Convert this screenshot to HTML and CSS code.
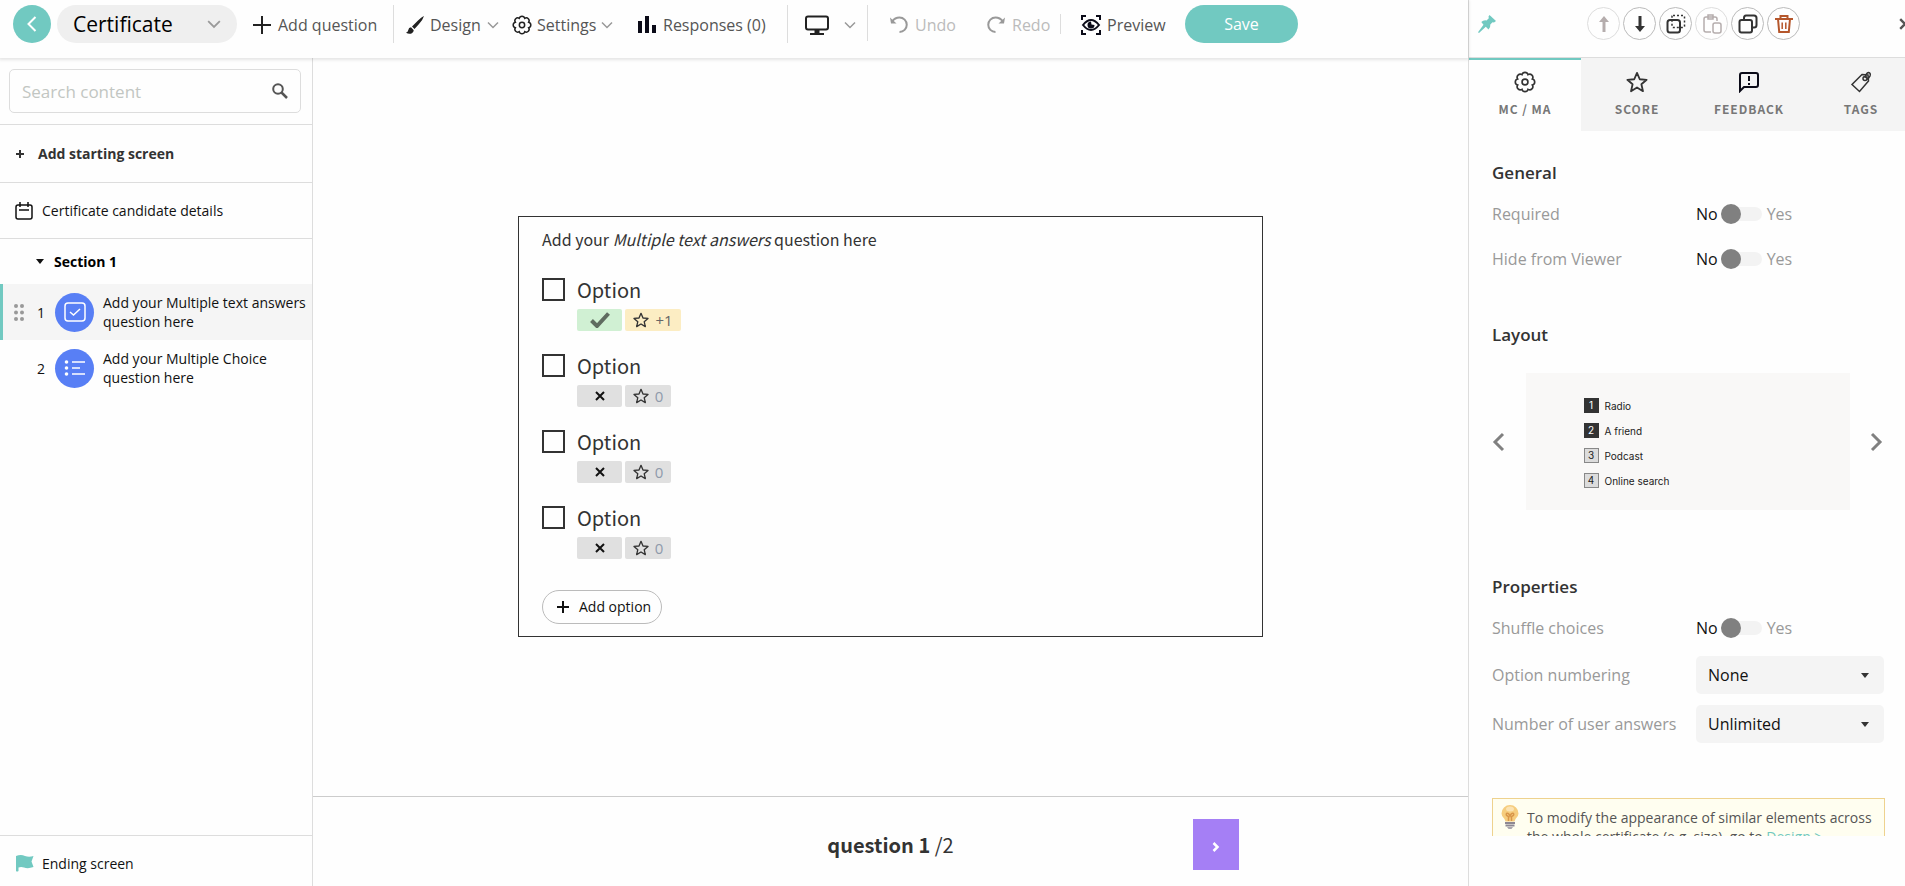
FILE: index.html
```html
<!DOCTYPE html>
<html lang="en">
<head>
    <meta charset="UTF-8">
    <meta name="viewport" content="width=device-width, initial-scale=1.0">
    <title>Certificate</title>
    <link rel="stylesheet" href="styles.css">
</head>
<body>
    <svg class="sprite" aria-hidden="true">
        <symbol id="chevron" viewBox="0 0 12 12"><path d="M1 3.500 6 8.500 11 3.500" fill="none" stroke="currentColor" stroke-width="1.500"/></symbol>
        <symbol id="plus" viewBox="0 0 18 18"><path d="M9 0V18M0 9H18" stroke="currentColor" stroke-width="2"/></symbol>
        <symbol id="plus-small" viewBox="0 0 8 8"><path d="M4 0V8M0 4H8" stroke="currentColor" stroke-width="2"/></symbol>
        <symbol id="star" viewBox="0 0 24 24"><path d="M12 2 15 9 22.500 9.600 16.800 14.500 18.500 22 12 18 5.500 22 7.200 14.500 1.500 9.600 9 9Z" fill="none" stroke="currentColor" stroke-width="2" stroke-linejoin="round"/></symbol>
        <symbol id="gear" viewBox="0 0 24 24">
            <path d="M20 8.700A3.400 3.400 0 0 1 20 15.300A3.400 3.400 0 0 1 15.300 20A3.400 3.400 0 0 1 8.700 20A3.400 3.400 0 0 1 4 15.300A3.400 3.400 0 0 1 4 8.700A3.400 3.400 0 0 1 8.700 4A3.400 3.400 0 0 1 15.300 4A3.400 3.400 0 0 1 20 8.700Z" fill="none" stroke="currentColor" stroke-width="1.800"/>
            <circle cx="12" cy="12" r="3.200" fill="none" stroke="currentColor" stroke-width="1.800"/>
        </symbol>
        <symbol id="undo" viewBox="0 0 18 18"><path d="M2 5.500Q5 1.500 9.500 1.500A7 7 0 0 1 9.500 16" fill="none" stroke="currentColor" stroke-width="2"/><path d="M0 1.500 1 7.500H6.500Z" fill="currentColor"/></symbol>
        <symbol id="cross" viewBox="0 0 10 10"><path d="M1 1 9 9M9 1 1 9" stroke="currentColor" stroke-width="2"/></symbol>
    </svg>

    <div class="app">
        <div class="workspace">
            <header class="toolbar">
                <button class="back" aria-label="Back">
                    <svg width="10" height="16" viewBox="0 0 10 16"><path d="M8.500 1 1.500 8 8.500 15" fill="none" stroke="currentColor" stroke-width="2"/></svg>
                </button>
                <button class="title">Certificate <svg class="chevron" width="14" height="14"><use href="#chevron"/></svg></button>
                <button class="tool add-question"><svg width="18" height="18"><use href="#plus"/></svg>Add question</button>
                <span class="divider"></span>
                <button class="tool design">
                    <svg width="18" height="18" viewBox="0 0 18 18"><path d="M18 0Q15.500 1 11.500 5L6 10.500 8.500 13 13 8Q17 3.500 18 0ZM5 11.300Q2.600 11.500 2.300 14Q2 16.200 0 16.800Q3.500 18.800 6.200 17Q8 15.600 7.600 14Z" fill="currentColor"/></svg>
                    Design <svg class="chevron" width="12" height="12"><use href="#chevron"/></svg>
                </button>
                <button class="tool settings"><svg width="20" height="20"><use href="#gear"/></svg>Settings <svg class="chevron" width="12" height="12"><use href="#chevron"/></svg></button>
                <button class="tool responses">
                    <svg width="18" height="17" viewBox="0 0 18 17"><path d="M0 5H4V17H0ZM7 0H11V17H7ZM14 9H18V17H14Z" fill="#0b0b18"/></svg>
                    Responses (0)
                </button>
                <span class="divider"></span>
                <button class="tool device" aria-label="Preview device">
                    <svg width="24" height="20" viewBox="0 0 24 20"><rect x="1" y="1.500" width="22" height="13" rx="2" fill="none" stroke="currentColor" stroke-width="2"/><path d="M9.500 15H14.500V18H9.500Z" fill="currentColor"/><path d="M5 19H19" stroke="currentColor" stroke-width="2"/></svg>
                    <svg class="chevron" width="12" height="12"><use href="#chevron"/></svg>
                </button>
                <span class="divider medium"></span>
                <button class="tool undo" disabled><svg width="18" height="18"><use href="#undo"/></svg>Undo</button>
                <button class="tool redo" disabled><svg class="flip" width="18" height="18"><use href="#undo"/></svg>Redo</button>
                <span class="divider short"></span>
                <button class="tool preview">
                    <svg width="20" height="20" viewBox="0 0 20 20"><path d="M1 5V1H5M15 1H19V5M19 15V19H15M5 19H1V15" fill="none" stroke="#0b0b18" stroke-width="2"/><path d="M2 10Q10 0 18 10Q10 20 2 10Z" fill="none" stroke="#0b0b18" stroke-width="2"/><path d="M10 6.500A3.500 3.500 0 1 0 13.500 10L10.500 9.500Z" fill="#0b0b18"/></svg>
                    Preview
                </button>
                <button class="save">Save</button>
            </header>

            <div class="columns">
                <nav class="sidebar">
                    <div class="search">
                        <input type="search" placeholder="Search content" aria-label="Search content">
                        <svg width="16" height="16" viewBox="0 0 16 16"><circle cx="6" cy="6" r="4.800" fill="none" stroke="currentColor" stroke-width="2"/><path d="M9.500 9.500 15 15" stroke="currentColor" stroke-width="2.500"/></svg>
                    </div>
                    <a class="row start" href="#"><svg width="8" height="8"><use href="#plus-small"/></svg>Add starting screen</a>
                    <a class="row details" href="#">
                        <svg width="18" height="18" viewBox="0 0 18 18"><rect x="1" y="3" width="16" height="14" rx="2" fill="none" stroke="currentColor" stroke-width="1.500"/><path d="M5 0V5M13 0V5M4 8H14" stroke="currentColor" stroke-width="1.500"/></svg>
                        Certificate candidate details
                    </a>
                    <div class="section"><span class="caret"></span>Section 1</div>
                    <a class="question active" href="#">
                        <svg class="drag" width="10" height="17" viewBox="0 0 10 17" fill="#999"><circle cx="2" cy="2" r="2"/><circle cx="8" cy="2" r="2"/><circle cx="2" cy="8.500" r="2"/><circle cx="8" cy="8.500" r="2"/><circle cx="2" cy="15" r="2"/><circle cx="8" cy="15" r="2"/></svg>
                        <span class="number">1</span>
                        <span class="badge"><svg width="22" height="20" viewBox="0 0 22 20"><rect x="1" y="1" width="20" height="18" rx="3" fill="none" stroke="#fff" stroke-width="1.500"/><path d="M6 10 9.500 13 16 7" fill="none" stroke="#fff" stroke-width="1.500"/></svg></span>
                        <span>Add your Multiple text answers question here</span>
                    </a>
                    <a class="question" href="#">
                        <span class="drag"></span>
                        <span class="number">2</span>
                        <span class="badge"><svg width="22" height="16" viewBox="0 0 22 16"><path d="M8 2H21M8 8H16M8 14H21" stroke="#fff" stroke-width="1.500"/><g fill="#fff"><circle cx="2.500" cy="2" r="1.800"/><circle cx="2.500" cy="8" r="1.800"/><circle cx="2.500" cy="14" r="1.800"/></g></svg></span>
                        <span>Add your Multiple Choice question here</span>
                    </a>
                    <a class="row ending" href="#">
                        <svg width="18" height="17" viewBox="0 0 18 17"><path d="M0 1Q5-1 9 1Q13 2.500 17.500 1L15.500 6.500 17.500 12Q12 14 8 12.500Q5 11.500 2.500 12.500V16Q1 17 0 16Z" fill="#71c9c1"/></svg>
                        Ending screen
                    </a>
                </nav>

                <main class="stage">
                    <div class="canvas">
                        <section class="card">
                            <p class="prompt">Add your <em>Multiple text answers</em> question here</p>
                            <div class="option">
                                <input type="checkbox" id="opt1">
                                <label for="opt1">Option</label>
                                <div class="marks">
                                    <button class="mark correct" aria-label="Correct"><svg width="20" height="16" viewBox="0 0 20 16"><path d="M1.500 8.500 7 14 18.500 1.500" fill="none" stroke="#5f6b60" stroke-width="4"/></svg></button>
                                    <button class="mark points"><svg width="16" height="16"><use href="#star"/></svg>+1</button>
                                </div>
                            </div>
                            <div class="option">
                                <input type="checkbox" id="opt2">
                                <label for="opt2">Option</label>
                                <div class="marks">
                                    <button class="mark" aria-label="Incorrect"><svg width="10" height="10"><use href="#cross"/></svg></button>
                                    <button class="mark zero"><svg width="16" height="16"><use href="#star"/></svg>0</button>
                                </div>
                            </div>
                            <div class="option">
                                <input type="checkbox" id="opt3">
                                <label for="opt3">Option</label>
                                <div class="marks">
                                    <button class="mark" aria-label="Incorrect"><svg width="10" height="10"><use href="#cross"/></svg></button>
                                    <button class="mark zero"><svg width="16" height="16"><use href="#star"/></svg>0</button>
                                </div>
                            </div>
                            <div class="option">
                                <input type="checkbox" id="opt4">
                                <label for="opt4">Option</label>
                                <div class="marks">
                                    <button class="mark" aria-label="Incorrect"><svg width="10" height="10"><use href="#cross"/></svg></button>
                                    <button class="mark zero"><svg width="16" height="16"><use href="#star"/></svg>0</button>
                                </div>
                            </div>
                            <button class="add-option"><svg width="12" height="12" viewBox="0 0 12 12"><path d="M6 0V12M0 6H12" stroke="currentColor" stroke-width="2"/></svg>Add option</button>
                        </section>
                    </div>
                    <footer class="pager">
                        <div class="pager-inner">
                            <p class="count"><b>question 1</b> /2</p>
                            <button class="next" aria-label="Next"><svg width="8" height="10" viewBox="0 0 8 10"><path d="M1.500 1 5.500 5 1.500 9" fill="none" stroke="#fff" stroke-width="2.500"/></svg></button>
                        </div>
                    </footer>
                </main>
            </div>
        </div>

        <aside class="panel">
            <div class="panel-bar">
                <svg class="pin" width="18" height="18" viewBox="0 0 18 18"><path d="M11.500 0 18 6 16 7.500 14.500 7.300 12.300 9.500Q12.700 12.500 10.500 14.500L7.800 11.800 1 18 0 17.300 5.500 9.800 3.300 7Q5.500 4.800 8.500 5.500L10.800 3.300 10.500 1.500Z" fill="#71c9c1"/></svg>
                <div class="actions">
                    <button disabled aria-label="Move up"><svg width="10" height="16" viewBox="0 0 10 16"><path d="M5 0 10 6H6.500V16H3.500V6H0Z" fill="currentColor"/></svg></button>
                    <button aria-label="Move down"><svg width="10" height="16" viewBox="0 0 10 16"><path d="M5 16 10 10H6.500V0H3.500V10H0Z" fill="currentColor"/></svg></button>
                    <button aria-label="Duplicate"><svg width="20" height="20" viewBox="0 0 20 20" fill="none" stroke="currentColor"><rect x="1.500" y="6" width="12.500" height="12.500" rx="2.500" stroke-width="2"/><rect x="6" y="1.500" width="12.500" height="12" rx="1" stroke-width="1.500" stroke-dasharray="2 2"/></svg></button>
                    <button disabled aria-label="Paste"><svg width="20" height="20" viewBox="0 0 20 20" fill="none" stroke="currentColor" stroke-width="1.500"><path d="M9 18H4Q2 18 2 16V5Q2 3 4 3H13Q15 3 15 5V7M6 1H11V5H6Z"/><rect x="11" y="9" width="8" height="10" rx="2"/></svg></button>
                    <button aria-label="Copy"><svg width="20" height="20" viewBox="0 0 20 20" fill="none" stroke="currentColor" stroke-width="2"><rect x="1.500" y="6" width="12.500" height="12.500" rx="2"/><path d="M6 6V4Q6 1.500 8 1.500H16Q18.500 1.500 18.500 4V11Q18.500 13.500 16 13.500H14"/></svg></button>
                    <button class="delete" aria-label="Delete"><svg width="18" height="20" viewBox="0 0 18 20" fill="none" stroke="currentColor" stroke-width="2"><path d="M0 5H18M5.500 5V2H12.500V5M3 5 4.200 18H13.800L15 5"/><path d="M7.200 8.500V15M10.800 8.500V15" stroke-width="1.500"/></svg></button>
                </div>
                <button class="close" aria-label="Close"><svg width="12" height="12"><use href="#cross"/></svg></button>
            </div>
            <div class="tabs">
                <button class="tab selected"><svg width="22" height="22"><use href="#gear"/></svg>MC / MA</button>
                <button class="tab"><svg width="22" height="22"><use href="#star"/></svg>SCORE</button>
                <button class="tab"><svg width="22" height="22" viewBox="0 0 22 22"><path d="M2 20V4Q2 2 4 2H18Q20 2 20 4V14Q20 16 18 16H6Z" fill="none" stroke="#0b0b18" stroke-width="2"/><path d="M11 5V10M11 12V14" stroke="#0b0b18" stroke-width="2"/></svg>FEEDBACK</button>
                <button class="tab"><svg width="22" height="22" viewBox="0 0 22 22" fill="none" stroke="currentColor" stroke-width="1.500"><path d="M12 3.500 18 4 18.500 10 9.500 20.500 2 13.500Z"/><circle cx="15" cy="7.500" r="2"/><path d="M15 7Q16 2 18.500 1.500Q21 2 20 5Q19 7.500 16.500 8.500"/></svg>TAGS</button>
            </div>
            <div class="properties">
                <h2>General</h2>
                <div class="field"><label for="required">Required</label><span class="switch">No<input type="checkbox" id="required"><i>Yes</i></span></div>
                <div class="field"><label for="hide">Hide from Viewer</label><span class="switch">No<input type="checkbox" id="hide"><i>Yes</i></span></div>

                <h2 class="layout-title">Layout</h2>
                <div class="carousel">
                    <button aria-label="Previous layout"><svg width="13" height="20" viewBox="0 0 13 20"><path d="M11 2 3 10 11 18" fill="none" stroke="currentColor" stroke-width="3"/></svg></button>
                    <ol class="sample">
                        <li><b class="dark">1</b>Radio</li>
                        <li><b class="dark">2</b>A friend</li>
                        <li><b>3</b>Podcast</li>
                        <li><b>4</b>Online search</li>
                    </ol>
                    <button aria-label="Next layout"><svg width="13" height="20" viewBox="0 0 13 20"><path d="M2 2 10 10 2 18" fill="none" stroke="currentColor" stroke-width="3"/></svg></button>
                </div>

                <h2 class="props-title">Properties</h2>
                <div class="field"><label for="shuffle">Shuffle choices</label><span class="switch">No<input type="checkbox" id="shuffle"><i>Yes</i></span></div>
                <div class="field tall"><label for="numbering">Option numbering</label><span class="select"><select id="numbering"><option>None</option></select></span></div>
                <div class="field tall"><label for="answers">Number of user answers</label><span class="select"><select id="answers"><option>Unlimited</option></select></span></div>

                <div class="tip">
                    <svg width="18" height="24" viewBox="0 0 18 24"><path d="M9 0A8.500 8.500 0 0 1 17.500 8.500Q17.500 11.500 14.500 14L13.500 16.500H4.500L3.500 14Q.5 11.500 .5 8.500A8.500 8.500 0 0 1 9 0Z" fill="#f6cd7f"/><ellipse cx="9" cy="4" rx="4" ry="2.500" fill="#fbe3b3"/><path d="M7.500 16V11.500Q4.500 10.500 5.500 8.500Q7.500 7.500 9 11Q10.500 7.500 12.500 8.500Q13.500 10.500 10.500 11.500V16" fill="none" stroke="#d9964a" stroke-width="1.500"/><path d="M4 18H14M4.500 20.500H13.500" stroke="#8d8793" stroke-width="2"/><path d="M6 22H12L10.500 24H7.500Z" fill="#a9a4ad"/></svg>
                    <p>To modify the appearance of similar elements across the whole certificate (e.g. size), go to <a href="#">Design &gt;</a></p>
                </div>
            </div>
        </aside>
    </div>
</body>
</html>
```
FILE: styles.css
```css
* {
    box-sizing: border-box;
}

body {
    margin: 0;
    background: #fefefe;
    color: #333;
    font-family: "Open Sans", "Noto Sans", sans-serif;
    font-size: 16px;
}

button, input, select {
    font: inherit;
    color: inherit;
}

button {
    background: none;
    border: none;
    padding: 0;
    cursor: pointer;
}

a {
    color: inherit;
    text-decoration: none;
}

svg {
    flex: none;
}

.sprite {
    display: none;
}

.app {
    display: flex;
    height: 100vh;
    overflow: hidden;
}

.workspace {
    flex: 1;
    min-width: 0;
    display: flex;
    flex-direction: column;
}

/* top toolbar */
.toolbar {
    display: flex;
    align-items: flex-start;
    height: 58px;
    padding: 5px 0 0 13px;
    box-shadow: 0 1px 3px 1px rgba(0, 0, 0, 0.1);
    z-index: 1;
}

.toolbar > * {
    flex: none;
    height: 38px;
}

.back {
    display: flex;
    align-items: center;
    justify-content: center;
    width: 38px;
    border-radius: 50%;
    background: #71c9c1;
    color: #fff;
}

.title {
    display: flex;
    align-items: center;
    justify-content: space-between;
    width: 180px;
    margin-left: 6px;
    padding: 0 16px;
    border-radius: 19px;
    background: #efefef;
    color: #000;
    font-size: 21px;
    font-weight: 500;
}

.chevron {
    color: #999;
}

.tool {
    display: flex;
    align-items: center;
    gap: 7px;
    padding-top: 1px;
    color: #555;
    white-space: nowrap;
}

.tool svg:first-child {
    color: #222;
}

.tool:disabled {
    color: #bbb;
}

.tool:disabled svg:first-child {
    color: #999;
}

.add-question {
    width: 140px;
    margin-left: 16px;
}

.divider {
    width: 1px;
    background: #ddd;
}

.divider.medium {
    height: 36px;
}

.divider.short {
    height: 20px;
    margin-top: 9px;
}

.design {
    gap: 6px;
    width: 107px;
    padding-left: 12px;
}

.settings {
    gap: 5px;
    width: 125px;
    padding-left: 11px;
}

.responses {
    width: 161px;
    padding-left: 12px;
}

.device {
    gap: 15px;
    width: 79px;
    padding-left: 17px;
}

.undo {
    width: 97px;
    margin-left: 22px;
}

.redo {
    width: 73px;
}

.flip {
    transform: scaleX(-1);
}

.preview {
    gap: 6px;
    width: 104px;
    margin-left: 20px;
}

.save {
    width: 113px;
    border-radius: 19px;
    background: #71c9c1;
    color: #fff;
}

/* question list */
.columns {
    flex: 1;
    min-height: 0;
    display: flex;
}

.sidebar {
    display: flex;
    flex-direction: column;
    width: 313px;
    border-right: 1px solid #ddd;
    color: #111;
    font-size: 14px;
}

.search {
    display: flex;
    align-items: center;
    height: 44px;
    margin: 11px 11px 11px 9px;
    padding: 0 12px;
    border: 1px solid #ddd;
    border-radius: 5px;
    color: #555;
}

.search input {
    flex: 1;
    min-width: 0;
    border: none;
    outline: none;
    background: none;
    padding: 0;
    font-size: 17px;
}

.search input::placeholder {
    color: #c2c6c2;
}

.row {
    display: flex;
    align-items: center;
    height: 57px;
    padding-left: 16px;
    border-top: 1px solid #ddd;
}

.start {
    gap: 14px;
    height: 58px;
    color: #333;
    font-weight: bold;
}

.details {
    gap: 9px;
    height: 56px;
    padding-left: 15px;
}

.section {
    display: flex;
    align-items: center;
    gap: 10px;
    height: 46px;
    padding-left: 36px;
    border-top: 1px solid #ddd;
    color: #000;
    font-weight: bold;
}

.caret {
    border: 4px solid transparent;
    border-top: 5px solid #111;
    border-bottom: none;
}

.question {
    display: flex;
    align-items: center;
    height: 56px;
    padding: 0 4px 0 14px;
    line-height: 19px;
}

.question.active {
    background: #f5f5f5;
    box-shadow: inset 3px 0 #71c9c1;
}

.drag {
    flex: none;
    width: 10px;
}

.number {
    flex: none;
    width: 31px;
    padding-left: 13px;
}

.badge {
    display: flex;
    flex: none;
    align-items: center;
    justify-content: center;
    width: 39px;
    height: 39px;
    margin-right: 9px;
    border-radius: 50%;
    background: #587ff5;
}

.ending {
    gap: 8px;
    height: 51px;
    margin-top: auto;
    padding-top: 5px;
}

/* question canvas */
.stage {
    flex: 1;
    min-width: 0;
    display: flex;
    flex-direction: column;
    font-family: "Noto Sans CJK JP", sans-serif;
}

.canvas {
    flex: 1;
    display: flex;
    align-items: center;
    justify-content: center;
    padding-bottom: 2px;
}

.card {
    width: 745px;
    padding: 10px 23px 12px;
    border: 1px solid #333;
}

.prompt {
    margin: 0 0 24px;
    font-size: 16px;
    line-height: 25px;
}

.option {
    display: grid;
    grid-template-columns: 35px 1fr;
    grid-template-rows: 33px 22px;
    height: 76px;
}

.option input {
    appearance: none;
    width: 23px;
    height: 23px;
    margin: 2px 0 0;
    border: 2px solid #333;
}

.option label {
    font-size: 20px;
    line-height: 28px;
}

.marks {
    grid-column: 2;
    display: flex;
    gap: 3px;
}

.mark {
    display: flex;
    align-items: center;
    justify-content: center;
    gap: 6px;
    width: 45px;
    border-radius: 2px;
    background: #e0e0e0;
    color: #111;
    font-family: "Open Sans", sans-serif;
    font-size: 15px;
}

.mark.correct {
    background: #d0f0d3;
}

.mark.points {
    width: 56px;
    background: #fcedc3;
    color: #666;
}

.mark.zero {
    width: 46px;
    color: #8e9aab;
}

.mark.points svg, .mark.zero svg {
    color: #333;
}

.add-option {
    display: flex;
    align-items: center;
    gap: 10px;
    height: 34px;
    margin-top: 10px;
    padding: 0 10px 0 14px;
    border: 1px solid #bbb;
    border-radius: 17px;
    color: #111;
    font-family: "Open Sans", sans-serif;
    font-size: 14px;
}

.pager {
    height: 90px;
    border-top: 1px solid #ccc;
}

.pager-inner {
    display: grid;
    grid-template-columns: 1fr auto 1fr;
    align-items: center;
    width: 697px;
    height: 95px;
    margin: 0 auto;
}

.count {
    grid-column: 2;
    margin: 0;
    font-size: 20px;
}

.next {
    justify-self: end;
    width: 46px;
    height: 51px;
    background: #a57ff5;
}

/* settings panel */
.panel {
    width: 437px;
    border-left: 1px solid #ddd;
    overflow: hidden;
}

.panel-bar {
    display: flex;
    align-items: center;
    height: 58px;
    padding: 0 0 10px 9px;
    border-bottom: 1px solid #ddd;
}

.actions {
    display: flex;
    gap: 3px;
    margin: 0 auto 0 91px;
}

.actions button {
    display: flex;
    align-items: center;
    justify-content: center;
    width: 33px;
    height: 33px;
    border: 1px solid #bbb;
    border-radius: 50%;
}

.actions button:disabled {
    border-color: #ddd;
    color: #b5adad;
}

.actions .delete {
    color: #b5562b;
}

.close {
    margin-right: -6px;
    height: 12px;
    display: flex;
    color: #555;
}

.tabs {
    display: flex;
}

.tab {
    display: flex;
    flex: 0 0 112px;
    flex-direction: column;
    align-items: center;
    gap: 6px;
    height: 73px;
    padding-top: 13px;
    background: #f4f4f4;
    color: #777;
    font-family: "Noto Sans CJK JP", sans-serif;
    font-size: 12px;
    font-weight: bold;
    letter-spacing: 1px;
    line-height: 19px;
}

.tab svg {
    color: #333;
}

.tab.selected {
    background: none;
    box-shadow: inset 0 2px #71c9c1;
}

.properties {
    height: calc(100vh - 181px);
    padding: 30px 20px 0 23px;
    overflow: hidden;
}

h2 {
    margin: 0 0 6px;
    font-size: 17px;
    font-weight: 600;
    line-height: 24px;
}

.field {
    display: grid;
    grid-template-columns: 204px 1fr;
    align-items: center;
    height: 45px;
    color: #999;
}

.switch {
    display: flex;
    align-items: center;
    color: #111;
}

.switch i {
    color: #999;
    font-style: normal;
}

.switch input {
    appearance: none;
    display: flex;
    align-items: center;
    width: 41px;
    height: 14px;
    margin: 0 5px 0 3px;
    border-radius: 7px;
    background: #f3f3f3;
}

.switch input::before {
    content: "";
    width: 20px;
    height: 20px;
    border-radius: 50%;
    background: #808080;
}

.layout-title {
    margin-top: 42px;
    margin-bottom: 26px;
}

.carousel {
    display: flex;
    align-items: center;
    justify-content: space-between;
    color: #808080;
    margin-right: 2px;
}

.carousel button {
    display: flex;
}

.sample {
    width: 324px;
    height: 137px;
    margin: 0;
    padding: 20px 0 0 58px;
    background: #f9f8f7;
    color: #222;
    font-family: Inter, sans-serif;
    font-size: 10px;
    list-style: none;
}

.sample li {
    display: flex;
    align-items: center;
    gap: 6px;
    height: 25px;
}

.sample b {
    width: 15px;
    height: 15px;
    border: 1px solid #888;
    background: #dcdcdc;
    font-weight: normal;
    line-height: 13px;
    text-align: center;
}

.sample .dark {
    border-color: #333;
    background: #333;
    color: #fff;
}

.props-title {
    margin-top: 65px;
}

.field.tall {
    height: 49px;
}

.select {
    position: relative;
}

.select select {
    appearance: none;
    width: 188px;
    height: 38px;
    padding: 0 12px;
    border: none;
    border-radius: 5px;
    background: #f4f4f4;
    color: #111;
}

.select::after {
    content: "";
    position: absolute;
    top: 17px;
    right: 16px;
    border: 4px solid transparent;
    border-top: 5px solid #333;
    border-bottom: none;
}

.tip {
    display: flex;
    gap: 8px;
    margin-top: 50px;
    padding: 6px 8px;
    border: 1px solid #eed28e;
    background: #fffef0;
    color: #555;
    font-size: 14px;
    line-height: 19px;
}

.tip p {
    margin: 3px 0 0;
}

.tip a {
    color: #71c9c1;
}
```
